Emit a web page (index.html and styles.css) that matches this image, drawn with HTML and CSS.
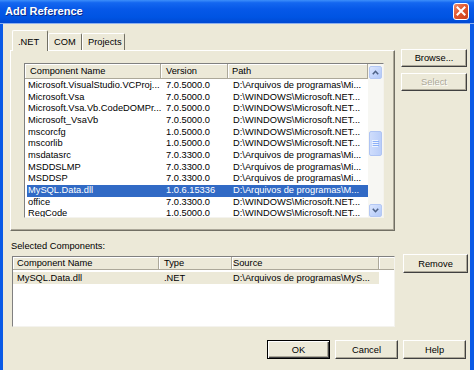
FILE: index.html
```html
<!DOCTYPE html>
<html lang="en">
<head>
    <meta charset="UTF-8">
    <meta name="viewport" content="width=device-width, initial-scale=1.0">
    <link rel="stylesheet" href="styles.css">
    <title>Add Reference</title>
</head>
<body>
    <div class="window">
        <!-- Title bar -->
        <div class="titlebar">
            <span class="title">Add Reference</span>
            <span class="close-btn">
                <svg width="10" height="10" viewBox="0 0 10 10"><path d="M1.5 1.5 L8.5 8.5 M8.5 1.5 L1.5 8.5" stroke="#fff" stroke-width="2" stroke-linecap="square"/></svg>
            </span>
        </div>

        <div class="client">
            <!-- Tabs + Browse/Select -->
            <div class="top-row">
                <div class="tabs">
                    <div class="tabstrip">
                        <div class="tab tab-active tab-net">.NET</div>
                        <div class="tab tab-com">COM</div>
                        <div class="tab tab-projects">Projects</div>
                    </div>
                    <div class="tabpanel">
                        <div class="listbox">
                            <div class="lv-main">
                                <div class="lv-header">
                                    <div class="hcell hcell-name">Component Name</div>
                                    <div class="hcell hcell-version">Version</div>
                                    <div class="hcell hcell-path">Path</div>
                                </div>
                                <div class="lv-body">
                                    <div class="row"><span>Microsoft.VisualStudio.VCProj...</span><span>7.0.5000.0</span><span>D:\Arquivos de programas\Mi...</span></div>
                                    <div class="row"><span>Microsoft.Vsa</span><span>7.0.5000.0</span><span>D:\WINDOWS\Microsoft.NET...</span></div>
                                    <div class="row"><span>Microsoft.Vsa.Vb.CodeDOMPr...</span><span>7.0.5000.0</span><span>D:\WINDOWS\Microsoft.NET...</span></div>
                                    <div class="row"><span>Microsoft_VsaVb</span><span>7.0.5000.0</span><span>D:\WINDOWS\Microsoft.NET...</span></div>
                                    <div class="row"><span>mscorcfg</span><span>1.0.5000.0</span><span>D:\WINDOWS\Microsoft.NET...</span></div>
                                    <div class="row"><span>mscorlib</span><span>1.0.5000.0</span><span>D:\WINDOWS\Microsoft.NET...</span></div>
                                    <div class="row"><span>msdatasrc</span><span>7.0.3300.0</span><span>D:\Arquivos de programas\Mi...</span></div>
                                    <div class="row"><span>MSDDSLMP</span><span>7.0.3300.0</span><span>D:\Arquivos de programas\Mi...</span></div>
                                    <div class="row"><span>MSDDSP</span><span>7.0.3300.0</span><span>D:\Arquivos de programas\Mi...</span></div>
                                    <div class="row row-selected"><span>MySQL.Data.dll</span><span>1.0.6.15336</span><span>D:\Arquivos de programas\M...</span></div>
                                    <div class="row"><span>office</span><span>7.0.3300.0</span><span>D:\WINDOWS\Microsoft.NET...</span></div>
                                    <div class="row"><span>RegCode</span><span>1.0.5000.0</span><span>D:\WINDOWS\Microsoft.NET...</span></div>
                                </div>
                            </div>
                            <!-- Scrollbar -->
                            <div class="vscroll">
                                <div class="sb-btn">
                                    <svg width="7" height="5" viewBox="0 0 7 5"><path d="M0.8 4.2 L3.5 1.3 L6.2 4.2" fill="none" stroke="#4D6185" stroke-width="1.6"/></svg>
                                </div>
                                <div class="sb-thumb">
                                    <svg width="7" height="7" viewBox="0 0 7 7">
                                        <path d="M0 0.5 H6 M0 2.5 H6 M0 4.5 H6 M0 6.5 H6" stroke="#EEF4FE" stroke-width="1"/>
                                        <path d="M1 1.5 H7 M1 3.5 H7 M1 5.5 H7" stroke="#8CB0F8" stroke-width="1"/>
                                    </svg>
                                </div>
                                <div class="sb-spacer"></div>
                                <div class="sb-btn">
                                    <svg width="7" height="5" viewBox="0 0 7 5"><path d="M0.8 0.8 L3.5 3.7 L6.2 0.8" fill="none" stroke="#4D6185" stroke-width="1.6"/></svg>
                                </div>
                            </div>
                        </div>
                    </div>
                </div>
                <div class="side">
                    <button class="btn btn-browse">Browse...</button>
                    <button class="btn btn-select" disabled>Select</button>
                </div>
            </div>

            <!-- Selected components -->
            <div class="middle-row">
                <div class="selected">
                    <div class="label">Selected Components:</div>
                    <div class="listview2">
                        <div class="lv2-header">
                            <div class="hcell2 hcell2-name">Component Name</div>
                            <div class="hcell2 hcell2-type">Type</div>
                            <div class="hcell2 hcell2-source">Source</div>
                            <div class="hcell2 hcell2-empty"></div>
                        </div>
                        <div class="row2"><span>MySQL.Data.dll</span><span>.NET</span><span>D:\Arquivos de programas\MyS...</span></div>
                    </div>
                </div>
                <button class="btn btn-remove">Remove</button>
            </div>

            <!-- Dialog buttons -->
            <div class="footer">
                <button class="btn btn-foot btn-default">OK</button>
                <button class="btn btn-foot">Cancel</button>
                <button class="btn btn-foot">Help</button>
            </div>
        </div>
    </div>
</body>
</html>
```

FILE: styles.css
```css
/* Page */
body {
    margin: 0;
    font-family: 'Liberation Sans', Arial, sans-serif;
    font-size: 9.3px;
    color: #000;
}

/* Window frame */
.window {
    width: 474px;
    height: 370px;
    display: flex;
    flex-direction: column;
    background-color: #ECE9D8;
    overflow: hidden;
}

/* Title bar */
.titlebar {
    height: 24px;
    flex: none;
    box-sizing: border-box;
    display: flex;
    align-items: center;
    justify-content: space-between;
    padding: 0 5px 1px 5px;
    background: linear-gradient(#3D8FFA 0%, #1467F0 12%, #0658E8 40%, #0054E3 75%, #0049D2 100%);
    border-bottom: 1px solid #8FB1EE;
}

.title {
    color: #fff;
    font-weight: bold;
    font-size: 11px;
    text-shadow: 1px 1px #0A2A8A;
}

.close-btn {
    width: 16px;
    height: 17px;
    box-sizing: border-box;
    display: flex;
    align-items: center;
    justify-content: center;
    border: 1px solid #fff;
    border-radius: 3px;
    background: linear-gradient(135deg, #F08C6C 0%, #E0582F 45%, #C93D18 100%);
}

/* Client area */
.client {
    flex: 1;
    display: flex;
    flex-direction: column;
    padding-top: 6px;
    border-left: 3px solid #0A5AE6;
    border-right: 4px solid #0A5AE6;
}

.top-row {
    display: flex;
}

/* Tab control */
.tabs {
    margin-left: 7px;
    width: 385px;
}

.tabstrip {
    display: flex;
    height: 20px;
    padding-left: 2px;
}

.tab {
    box-sizing: border-box;
    height: 17px;
    margin-top: 3px;
    padding-left: 5px;
    line-height: 17px;
    border-top: 1px solid #fff;
    border-left: 1px solid #fff;
    border-right: 1px solid #716F64;
    border-top-left-radius: 2px;
    border-top-right-radius: 2px;
    background-color: #ECE9D8;
}

.tab-active {
    position: relative;
    z-index: 1;
    height: 21px;
    margin-top: 0;
    padding-top: 3px;
}

.tab-net { width: 36px; }
.tab-com { width: 34px; }
.tab-projects { width: 43px; padding-left: 5px; }

.tabpanel {
    box-sizing: border-box;
    height: 181px;
    padding: 12px 10px 0 13px;
    border: 1px solid;
    border-color: #fff #716F64 #716F64 #fff;
    box-shadow: inset -1px -1px #ACA899;
}

/* Main list view */
.listbox {
    box-sizing: border-box;
    height: 155px;
    display: flex;
    border: 1px solid;
    border-color: #808080 #F4F3EE #F4F3EE #808080;
    background-color: #fff;
}

.lv-main {
    width: 343px;
    display: flex;
    flex-direction: column;
    overflow: hidden;
}

.lv-header {
    display: flex;
    height: 15px;
    flex: none;
}

.hcell {
    box-sizing: border-box;
    height: 15px;
    line-height: 14px;
    padding-left: 5px;
    background-color: #ECE9D8;
    border-right: 1px solid #ACA899;
    border-bottom: 1px solid #ACA899;
    box-shadow: inset 1px 1px #fff;
    white-space: nowrap;
}

.hcell-name { width: 136px; }
.hcell-version { width: 67px; }
.hcell-path { width: 140px; padding-left: 4px; }

.lv-body {
    flex: 1;
    overflow: hidden;
    padding-top: 1px;
}

.row {
    display: grid;
    grid-template-columns: 134px 67px 140px;
    margin-left: 2px;
    height: 11.67px;
    line-height: 11.67px;
    white-space: nowrap;
}

.row span {
    padding-left: 5px;
    overflow: hidden;
}

.row span:first-child {
    padding-left: 1px;
}

.row-selected {
    background-color: #316AC5;
    color: #fff;
}

/* Scrollbar */
.vscroll {
    width: 15px;
    display: flex;
    flex-direction: column;
    background-color: #F7F7F3;
}

.sb-btn {
    box-sizing: border-box;
    width: 13px;
    height: 13px;
    margin: 2px 0 0 1px;
    display: flex;
    align-items: center;
    justify-content: center;
    border: 1px solid #B4C8F4;
    border-radius: 2px;
    background: linear-gradient(135deg, #DCE6FD 0%, #C3D5FB 55%, #B3C9F7 100%);
}

.sb-btn:last-child {
    margin-top: 0;
}

.sb-thumb {
    box-sizing: border-box;
    width: 13px;
    height: 25px;
    margin: 52px 0 0 1px;
    display: flex;
    align-items: center;
    justify-content: center;
    border: 1px solid #AFC4F3;
    border-radius: 2px;
    background: linear-gradient(to right, #CFDDFC, #BACEF9);
}

.sb-spacer {
    flex: 1;
}

/* Buttons */
.btn {
    box-sizing: border-box;
    height: 18px;
    padding: 0;
    font-family: inherit;
    font-size: 9.3px;
    color: #000;
    background-color: #ECE9D8;
    border: 1px solid;
    border-color: #fff #404040 #404040 #fff;
    box-shadow: inset -1px -1px #ACA899;
}

.btn:disabled {
    color: #ACA899;
    text-shadow: 1px 1px #fff;
}

.side {
    display: flex;
    flex-direction: column;
    margin-left: 6px;
    width: 66px;
}

.btn-browse {
    margin-top: 19px;
}

.btn-select {
    margin-top: 6px;
}

/* Selected components */
.middle-row {
    display: flex;
}

.selected {
    margin-left: 8px;
    width: 384px;
}

.label {
    margin-top: 9px;
    height: 12px;
    line-height: 12px;
}

.listview2 {
    box-sizing: border-box;
    margin: 4px 0 0 1px;
    width: 383px;
    height: 71px;
    border: 1px solid;
    border-color: #808080 #F4F3EE #F4F3EE #808080;
    background-color: #fff;
}

.lv2-header {
    display: flex;
}

.hcell2 {
    box-sizing: border-box;
    height: 13px;
    line-height: 12px;
    padding-left: 4px;
    background-color: #ECE9D8;
    border-right: 1px solid #ACA899;
    border-bottom: 1px solid #ACA899;
    box-shadow: inset 1px 1px #fff;
    white-space: nowrap;
}

.hcell2-name { width: 146px; }
.hcell2-type { width: 73px; padding-left: 5px; }
.hcell2-source { width: 147px; padding-left: 1px; }
.hcell2-empty { width: 15px; border-right: none; }

.row2 {
    display: grid;
    grid-template-columns: 146px 73px 147px;
    width: 366px;
    margin-top: 2px;
    height: 12px;
    line-height: 12px;
    background-color: #ECE9D8;
    white-space: nowrap;
}

.row2 span {
    padding-left: 5px;
}

.row2 span:first-child {
    padding-left: 4px;
}

.row2 span:last-child {
    padding-left: 1px;
}

.btn-remove {
    margin: 23px 0 0 8px;
    width: 65px;
    height: 19px;
}

/* Footer buttons */
.footer {
    display: flex;
    justify-content: flex-end;
    gap: 5px;
    margin-top: 13px;
    padding-right: 4px;
}

.btn-foot {
    width: 63px;
    height: 19px;
}

.btn-default {
    border: 1px solid #000;
    box-shadow: inset 1px 1px #fff, inset -1px -1px #404040, inset -2px -2px #ACA899;
}
```
